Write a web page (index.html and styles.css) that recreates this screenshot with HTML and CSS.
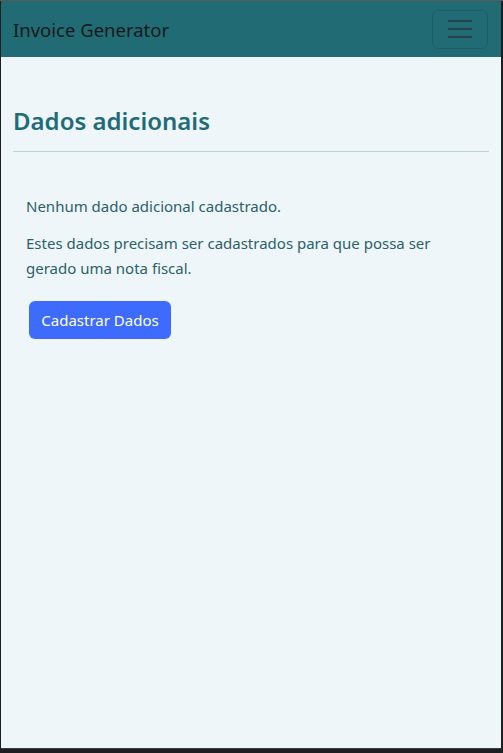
FILE: index.html
```html
<!DOCTYPE html>
<html lang="pt">
<head>
<meta charset="utf-8">
<title>Invoice Generator</title>
<link rel="stylesheet" href="styles.css">
</head>
<body>
<div class="frame">
  <nav class="navbar">
    <span class="brand">Invoice Generator</span>
    <button class="toggler" aria-label="Menu">
      <span class="bar"></span>
      <span class="bar"></span>
      <span class="bar"></span>
    </button>
  </nav>
  <main class="content">
    <h4 class="title">Dados adicionais</h4>
    <hr class="divider">
    <section class="info">
      <p>Nenhum dado adicional cadastrado.</p>
      <p>Estes dados precisam ser cadastrados para que possa ser gerado uma nota fiscal.</p>
      <button class="btn-primary">Cadastrar Dados</button>
    </section>
  </main>
</div>
</body>
</html>
```
FILE: styles.css
```css
html, body {
  margin: 0;
  padding: 0;
  height: 100%;
  background: #1c1e22;
}
body {
  padding: 0 2px 4px 1px;
  box-sizing: border-box;
  border-top: 1px solid #5a5a5a;
}
.frame {
  height: 100%;
  box-sizing: border-box;
  background: #eef6f9;
  border-bottom: 1px solid #3a3d40;
  font-family: "Noto Sans", "Open Sans", sans-serif;
  overflow: hidden;
}
.navbar {
  height: 56px;
  background: #216b75;
  display: flex;
  align-items: center;
  justify-content: space-between;
  padding: 0 13px 0 12px;
  box-sizing: border-box;
}
.brand {
  font-size: 18.5px;
  color: #151a1c;
}
.toggler {
  width: 56px;
  height: 39px;
  border: 1px solid rgba(0, 0, 0, 0.12);
  border-radius: 6px;
  background: transparent;
  display: flex;
  flex-direction: column;
  align-items: center;
  justify-content: center;
  gap: 6px;
  padding: 0;
}
.bar {
  display: block;
  width: 24px;
  height: 2px;
  background: #25434b;
}
.content {
  padding: 49px 12px 0 12px;
}
.title {
  margin: 0;
  font-size: 24px;
  font-weight: 600;
  color: #1f6b78;
  line-height: 30px;
}
.divider {
  border: 0;
  border-top: 1px solid #b7d6dc;
  margin: 15px 0 0 0;
}
.info {
  padding: 42px 13px 0 13px;
  color: #2d5f69;
  font-size: 15px;
  line-height: 25px;
}
.info p {
  margin: 0 0 12px 0;
}
.btn-primary {
  margin: 8px 0 0 3px;
  width: 142px;
  height: 38px;
  border: 0;
  border-radius: 6px;
  background: #3d6bfe;
  color: #ffffff;
  font-family: inherit;
  font-size: 15px;
  padding: 0;
}
```
